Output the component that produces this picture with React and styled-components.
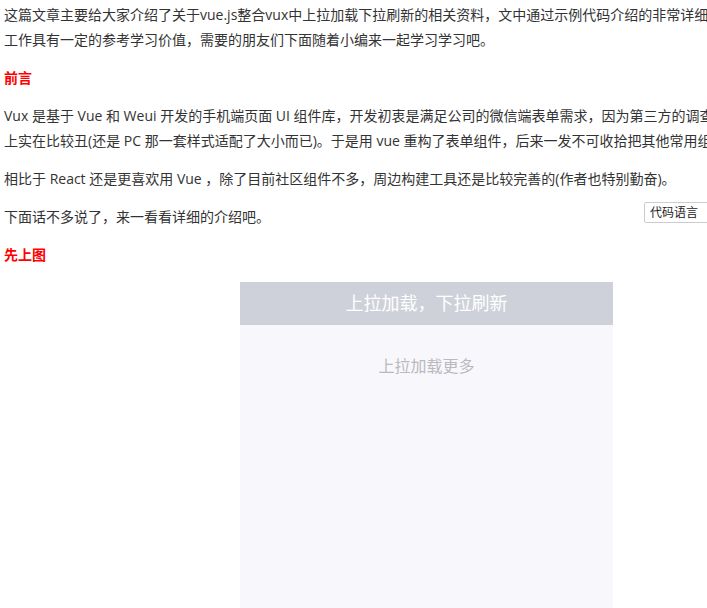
import styled, { createGlobalStyle } from "styled-components";

const GlobalStyle = createGlobalStyle`
  html, body {
    margin: 0;
    padding: 0;
    background: #fff;
    overflow: hidden;
  }
  body {
    font-family: "Open Sans", "Noto Sans CJK SC", sans-serif;
  }
`;

const Article = styled.article`
  width: 845px;
  padding: 2px 0 0 4px;
  color: #333;
  font-size: 14px;
  line-height: 25px;
`;

const Paragraph = styled.p`
  margin: 0 0 13px;
  white-space: ${(p) => (p.$nowrap ? "nowrap" : "normal")};
`;

const Heading = styled.p`
  margin: 0 0 13px;
  color: #ff0000;
  font-weight: bold;
`;

const ToolRow = styled.div`
  display: flex;
  align-items: center;
  margin: 0 0 13px;
`;

const ToolText = styled.span`
  flex: 0 0 640px;
`;

const LangSelect = styled.div`
  box-sizing: border-box;
  width: 80px;
  height: 21px;
  margin-top: -8px;
  padding: 0 5px;
  border: 1px solid #ccc;
  border-radius: 2px;
  font-size: 12px;
  line-height: 19px;
  color: #222;
`;

const Figure = styled.div`
  display: flex;
  justify-content: center;
  padding-top: 2px;
`;

const Phone = styled.div`
  width: 373px;
  height: 600px;
  background: #f8f8fc;
`;

const PhoneHeader = styled.div`
  height: 43px;
  background: #cfd1da;
  color: #fff;
  font-size: 18px;
  line-height: 43px;
  text-align: center;
`;

const LoadMore = styled.div`
  padding-top: 26px;
  color: #b9b9be;
  font-size: 16px;
  line-height: 30px;
  text-align: center;
`;

export default function App() {
  return (
    <>
      <GlobalStyle />
      <Article>
        <Paragraph $nowrap>
          这篇文章主要给大家介绍了关于vue.js整合vux中上拉加载下拉刷新的相关资料，文中通过示例代码介绍的非常详细，对大家的学习或者
          <br />
          工作具有一定的参考学习价值，需要的朋友们下面随着小编来一起学习学习吧。
        </Paragraph>
        <Heading>前言</Heading>
        <Paragraph $nowrap>
          Vux 是基于 Vue 和 Weui 开发的手机端页面 UI 组件库，开发初衷是满足公司的微信端表单需求，因为第三方的调查问卷表单系统在手机
          <br />
          上实在比较丑(还是 PC 那一套样式适配了大小而已)。于是用 vue 重构了表单组件，后来一发不可收拾把其他常用组件也一并开发了。
        </Paragraph>
        <Paragraph>
          相比于 React 还是更喜欢用 Vue ，除了目前社区组件不多，周边构建工具还是比较完善的(作者也特别勤奋)。
        </Paragraph>
        <ToolRow>
          <ToolText>下面话不多说了，来一看看详细的介绍吧。</ToolText>
          <LangSelect>代码语言</LangSelect>
        </ToolRow>
        <Heading>先上图</Heading>
        <Figure>
          <Phone>
            <PhoneHeader>上拉加载，下拉刷新</PhoneHeader>
            <LoadMore>上拉加载更多</LoadMore>
          </Phone>
        </Figure>
      </Article>
    </>
  );
}
